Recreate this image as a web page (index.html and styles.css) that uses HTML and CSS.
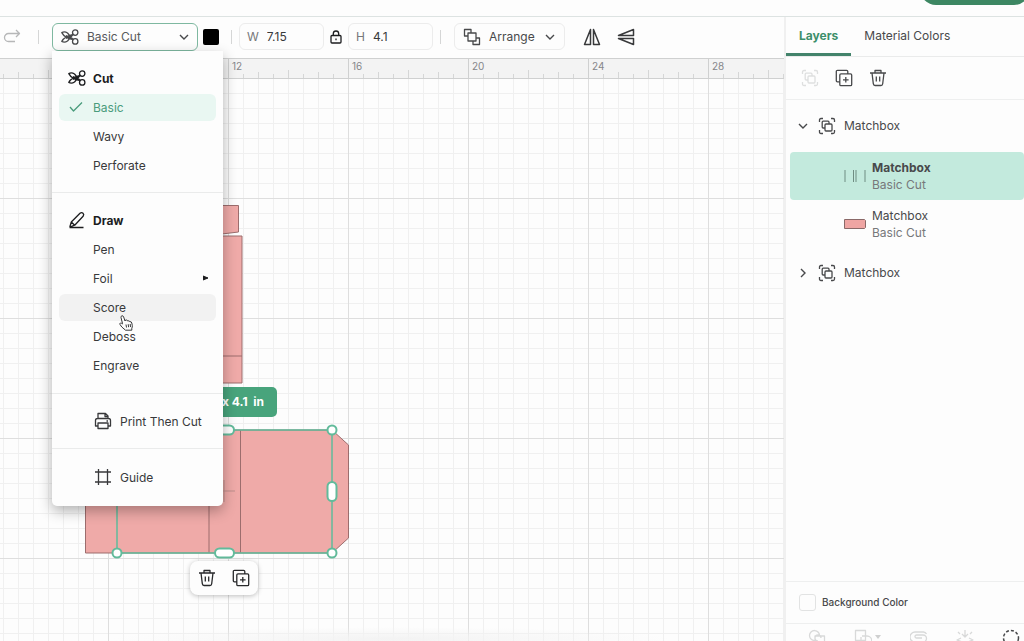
FILE: index.html
```html
<!DOCTYPE html>
<html lang="en">
<head>
<meta charset="utf-8">
<title>Design canvas</title>
<link rel="stylesheet" href="styles.css">
</head>
<body>
<svg class="sprite" aria-hidden="true">
  <symbol id="scissors" viewBox="0 0 18 16">
    <circle cx="14.2" cy="3.6" r="2.7"/><circle cx="14.2" cy="12.4" r="2.7"/>
    <path d="M.8 3.6Q3.5 2 6.5 4L12.200 10.6Q3.500 8.800 .8 3.600zM.8 12.400Q3.500 14 6.500 12L12.200 5.400Q3.500 7.200 .8 12.400zM5 6.500l5 2.500M5 9.500l5-2.500"/>
  </symbol>
  <symbol id="chevron" viewBox="0 0 10 10"><path d="m1 3 4 4 4-4"/></symbol>
  <symbol id="trash" viewBox="0 0 18 18"><path d="M1 4h16M6 4V1.5h6V4M3 4l1.3 10.7Q4.5 16.5 6 16.5h6q1.5 0 1.7-1.8L15 4M7.3 7.5v5M10.700 7.5v5"/></symbol>
  <symbol id="duplicate" viewBox="0 0 18 18"><path d="M4.8 12.8H2.5Q1.3 12.8 1.3 11.6V2.5q0-1.2 1.2-1.2h9.1q1.2 0 1.2 1.2v2.3M6 4.8h9.5q1.2 0 1.2 1.2v9.5q0 1.2-1.2 1.2H6q-1.2 0-1.2-1.2V6Q4.8 4.8 6 4.8zM10.8 8v5.6M8 10.8h5.6"/></symbol>
  <symbol id="group" viewBox="0 0 18 18"><path d="M1.5 5V3q0-1.5 1.5-1.5h2M13 1.5h2q1.5 0 1.5 1.5v2M16.5 13v2q0 1.5-1.5 1.5h-2M5 16.5H3q-1.5 0-1.5-1.5v-2M7 11H5.200Q4.200 11 4.200 10V5.200q0-1 1-1H10q1 0 1 1V7M8 7h5q1 0 1 1v5q0 1-1 1H8q-1 0-1-1V8q0-1 1-1z"/></symbol>
</svg>

<div class="app">
  <header class="topbar"><button class="make" type="button" aria-label="Make"></button></header>
  <div class="body">
    <main class="workspace">
      <div class="toolbar">
        <button class="icon-btn redo" type="button" aria-label="Redo"><svg class="icon" viewBox="0 0 18 18"><path d="M16 5.5H5.5a4 4 0 0 0 0 8H12M13 2l3.5 3.5L13 9"/></svg></button>
        <span class="sep sep-a"></span>
        <div class="operation">
          <svg class="icon op-icon" viewBox="0 0 18 16"><use href="#scissors"/></svg>
          <select class="op-select" aria-label="Operation"><option>Basic Cut</option><option>Score</option></select>
          <svg class="chev op-chev" viewBox="0 0 10 10"><use href="#chevron"/></svg>
          <div class="menu">
            <div class="menu-group">
              <h2 class="menu-title"><svg class="icon" viewBox="0 0 18 16"><use href="#scissors"/></svg>Cut</h2>
              <button class="item chosen" type="button"><svg class="icon check" viewBox="0 0 18 18"><path d="m3 9 3.5 4L15 4.5"/></svg>Basic</button>
              <button class="item" type="button">Wavy</button>
              <button class="item" type="button">Perforate</button>
            </div>
            <div class="menu-group draw">
              <h2 class="menu-title"><svg class="icon" viewBox="0 0 18 18"><path d="M1.5 16.5h14M1.8 16l1.5-5L12 2.300q1.600-1.300 3 0t.1 3L6.700 14.200 1.800 16M3.300 11l3.400 3.200"/></svg>Draw</h2>
              <button class="item" type="button">Pen</button>
              <button class="item" type="button">Foil<svg class="arrow" viewBox="0 0 5 6"><path d="M0 1v4l5-2z"/></svg></button>
              <button class="item hovered" type="button">Score</button>
              <button class="item" type="button">Deboss</button>
              <button class="item" type="button">Engrave</button>
            </div>
            <div class="menu-group">
              <button class="item wide" type="button"><svg class="icon" viewBox="0 0 18 18"><path d="M4 6.5v-5h7.5L14 4v2.5M11 1.5v3h3M4 14H1.5V8.5q0-2 2-2h11q2 0 2 2V14H14M4 11h10v5.5H4zM12.5 9h1.5"/></svg>Print Then Cut</button>
            </div>
            <div class="menu-group last">
              <button class="item wide" type="button"><svg class="icon" viewBox="0 0 18 18"><path d="M4.5 1v16M13.5 1v16M1 4h16M1 14h16"/></svg>Guide</button>
            </div>
            <svg class="cursor" viewBox="0 0 14 16"><path d="M3.5 8.5 2 2.5Q1.8 1 3 .8t1.600 1L6 6q.2-1.5 1.700-1 .8.2.9 1 1.5-.7 2.3.7 1.5-.4 1.900 1.3l.5 2.700q.2 1.3-.5 2.5v2H6.5L2.8 12 1 9.5q-.5-1 .3-1.400t2.200.9zM7 9.5l.5 3M9.200 9.2l.4 3M11.2 9l.3 3"/></svg>
          </div>
        </div>
        <button class="swatch" type="button" aria-label="Color"></button>
        <span class="sep sep-b"></span>
        <label class="field">W<input class="value" value="7.15"></label>
        <button class="icon-btn lock" type="button" aria-label="Lock proportions"><svg class="icon" viewBox="0 0 12 14"><path d="M2 5.5h8q1 0 1 1V12q0 1-1 1H2q-1 0-1-1V6.5q0-1 1-1zM3.3 5.5V3.7a2.7 2.7 0 0 1 5.4 0v1.8M6 8.5v1.7"/></svg></button>
        <label class="field">H<input class="value" value="4.1"></label>
        <span class="sep sep-c"></span>
        <button class="arrange" type="button"><svg class="icon" viewBox="0 0 18 18"><path d="M4.5 8H1.5V1.5H8v3M5 5h8v8H5zM10 13.5v3h6.5V10h-3"/></svg>Arrange<svg class="chev" viewBox="0 0 10 10"><use href="#chevron"/></svg></button>
        <div class="flips">
          <button class="icon-btn" type="button" aria-label="Flip horizontal"><svg class="icon" viewBox="0 0 18 18"><path d="M7.5 1.5v15h-6zM10.5 1.5v15h6z"/></svg></button>
          <button class="icon-btn" type="button" aria-label="Flip vertical"><svg class="icon" viewBox="0 0 18 18"><path d="M16.5 7.5h-15l15-6zM16.5 10.5h-15l15 6z"/></svg></button>
        </div>
      </div>
      <div class="ruler"><span class="mark">8</span><span class="mark">12</span><span class="mark">16</span><span class="mark">20</span><span class="mark">24</span><span class="mark">28</span></div>
      <div class="canvas">
        <svg class="art" viewBox="0 0 784 562">
          <g class="paper">
            <path d="M180 126.5h58.5V153L180 160z"/>
            <path d="M180 157h62v147h-62zM180 277h62"/>
            <path d="M85.5 351H332l16.5 15v93L332 474H85.5z"/>
            <path d="M209 351v123M240.5 351v123"/>
          </g>
          <path class="cross" d="M212 412h23M224 401v22"/>
          <g class="selection">
            <rect x="117" y="351" width="215" height="123"/>
            <circle cx="117" cy="474" r="4.5"/><circle cx="332" cy="474" r="4.5"/><circle cx="332" cy="351" r="4.5"/>
            <rect class="grip" x="215" y="346.5" width="19" height="9" rx="4.5"/>
            <rect class="grip" x="215" y="469.5" width="19" height="9" rx="4.5"/>
            <rect class="grip" x="327.5" y="403" width="9" height="19" rx="4.5"/>
          </g>
        </svg>
        <output class="size-tag">7.15 in x 4.1&nbsp; in</output>
        <div class="quick">
          <button class="icon-btn" type="button" aria-label="Delete"><svg class="icon" viewBox="0 0 18 18"><use href="#trash"/></svg></button>
          <button class="icon-btn" type="button" aria-label="Duplicate"><svg class="icon" viewBox="0 0 18 18"><use href="#duplicate"/></svg></button>
        </div>
      </div>
    </main>
    <aside class="side">
      <nav class="tabs"><button class="tab current" type="button">Layers</button><button class="tab" type="button">Material Colors</button></nav>
      <div class="actions">
        <button class="icon-btn faint" type="button" aria-label="Group"><svg class="icon" viewBox="0 0 18 18"><use href="#group"/></svg></button>
        <button class="icon-btn" type="button" aria-label="Duplicate"><svg class="icon" viewBox="0 0 18 18"><use href="#duplicate"/></svg></button>
        <button class="icon-btn" type="button" aria-label="Delete"><svg class="icon" viewBox="0 0 18 18"><use href="#trash"/></svg></button>
      </div>
      <div class="layers">
        <button class="group-row" type="button"><svg class="chev" viewBox="0 0 10 10"><use href="#chevron"/></svg><svg class="icon" viewBox="0 0 18 18"><use href="#group"/></svg>Matchbox</button>
        <button class="layer selected" type="button"><svg class="thumb" viewBox="0 0 22 12"><path d="M1 0v12M9.5 0v12M12 0v12M21 0v12"/></svg><span class="names"><span class="name">Matchbox</span><span class="kind">Basic Cut</span></span></button>
        <button class="layer" type="button"><svg class="thumb" viewBox="0 0 22 12"><path class="pink" d="M.5 1.5h20l1 1v7l-1 1H.5z"/></svg><span class="names"><span class="name">Matchbox</span><span class="kind">Basic Cut</span></span></button>
        <button class="group-row" type="button"><svg class="chev closed" viewBox="0 0 10 10"><use href="#chevron"/></svg><svg class="icon" viewBox="0 0 18 18"><use href="#group"/></svg>Matchbox</button>
      </div>
      <label class="background"><input class="box" type="checkbox">Background Color</label>
      <div class="tools">
        <button class="icon-btn" type="button" aria-label="Slice"><svg class="icon" viewBox="0 0 18 18"><path d="M7 11.5A5 5 0 1 1 11.5 7M7 7h9.5v9.5H7zM10 12a3 3 0 1 1 3-3"/></svg></button>
        <button class="icon-btn combine" type="button" aria-label="Combine"><svg class="icon" viewBox="0 0 18 18"><path d="M1.5 1.5h10v10h-10zM8 7h5a3.5 3.5 0 0 1 0 9.5H7V8"/></svg><svg class="caret" viewBox="0 0 6 4"><path d="M0 0h6L3 4z"/></svg></button>
        <button class="icon-btn" type="button" aria-label="Attach"><svg class="icon" viewBox="0 0 18 18"><path d="M12 9H6.5a1.5 1.5 0 0 1 0-3H13a3.5 3.5 0 0 1 0 7H5A5 5 0 0 1 5 3h8.5a4 4 0 0 1 3 2"/></svg></button>
        <button class="icon-btn" type="button" aria-label="Flatten"><svg class="icon" viewBox="0 0 18 18"><path d="M9 1v7M6 5l3 3 3-3M5 9l-4 2 8 3 8-3-4-2M2 3l2 2M16 3l-2 2"/></svg></button>
        <button class="icon-btn contour" type="button" aria-label="Contour"><svg class="icon" viewBox="0 0 18 18"><circle cx="9" cy="9" r="7.5"/></svg></button>
      </div>
    </aside>
  </div>
</div>
</body>
</html>
```
FILE: styles.css
```css
* { box-sizing: border-box; }
body { margin: 0; font-family: Inter, "Liberation Sans", sans-serif; font-size: 12px; line-height: 17px; color: #48494b; background: #fdfdfd; }
button, input, select { font: inherit; color: inherit; }
button { border: 0; padding: 0; background: none; text-align: left; }
svg { fill: none; stroke: currentColor; flex: none; }
.sprite { position: absolute; width: 0; height: 0; }
.icon { width: 18px; height: 18px; stroke-width: 1.3; stroke-linejoin: round; }
.chev { width: 10px; height: 10px; stroke-width: 1.4; }
.icon-btn { display: flex; color: #48494b; }
.app { display: flex; flex-direction: column; height: 100vh; overflow: hidden; }
.topbar { display: flex; justify-content: flex-end; align-items: flex-end; height: 17px; padding-bottom: 11px; border-bottom: 1px solid #dde3e2; overflow: hidden; flex: none; }
.make { width: 110px; height: 32px; margin-right: -6px; border-radius: 16px; background: #3d8763; flex: none; }
.body { display: flex; flex: 1; min-height: 0; }
.workspace { display: flex; flex-direction: column; flex: 1; min-width: 0; }

.toolbar { display: flex; align-items: center; height: 41px; padding: 0 0 2px 3px; position: relative; z-index: 2; flex: none; }
.redo { color: #b6b7b8; }
.sep { width: 1px; height: 14px; background: #d5d6d6; }
.sep-a { margin: 0 13px 0 17px; }
.sep-b { margin: 0 7px 0 12px; }
.sep-c { margin: 0 13px 0 7px; }
.operation { position: relative; display: flex; align-items: center; width: 146px; height: 28px; }
.op-select { appearance: none; width: 100%; height: 100%; border: 1px solid #7eb8a0; border-radius: 6px; background: #fdfdfd; padding: 0 24px 0 34px; color: #58595b; }
.op-icon { position: absolute; left: 9px; pointer-events: none; }
.op-chev { position: absolute; right: 9px; pointer-events: none; }
.swatch { width: 16px; height: 16px; margin-left: 5px; border-radius: 2px; background: #000; }
.field { display: flex; align-items: center; gap: 8px; width: 85px; height: 27px; padding: 0 7px; border: 1px solid #ececec; border-radius: 6px; color: #77787a; }
.value { width: 100%; min-width: 0; border: 0; padding: 0; background: none; color: #38393b; }
.lock { width: 24px; justify-content: center; color: #1c1d1f; }
.lock .icon { width: 12px; height: 14px; }
.arrange { display: flex; align-items: center; gap: 8px; width: 111px; height: 27px; padding: 0 9px 0 8px; border: 1px solid #ececec; border-radius: 6px; }
.arrange .chev { margin-left: auto; }
.flips { display: flex; gap: 16px; margin-left: 18px; }
.flips .icon { stroke-width: 1.5; color: #38393b; }

.menu { position: absolute; top: 100%; left: 0; width: 171px; background: #fdfdfd; border-radius: 0 0 5px 5px; box-shadow: 0 5px 14px rgba(0, 0, 0, .3); color: #38393b; }
.menu-group { display: flex; flex-direction: column; gap: 2px; padding: 14px 7px 13px; }
.menu-group + .menu-group { border-top: 1px solid #eaebeb; }
.menu-group.draw { padding-bottom: 14px; }
.menu-group.last { padding: 15px 7px; }
.menu-title { display: flex; align-items: center; gap: 7px; height: 27px; margin: 0; padding-left: 9px; font-size: 12px; font-weight: 700; color: #1c1d1f; }
.item { position: relative; display: flex; align-items: center; height: 27px; padding: 0 8px 0 34px; border-radius: 6px; }
.item.wide { gap: 8px; padding-left: 35px; }
.chosen { background: #e9f7f2; color: #4a9c7c; }
.check { position: absolute; left: 8px; }
.hovered { background: #f2f2f2; }
.arrow { width: 5px; height: 6px; margin-left: auto; fill: #1c1d1f; stroke-width: 1; color: #1c1d1f; }
.cursor { position: absolute; left: 67px; top: 264px; width: 14px; height: 16px; fill: #fdfdfd; stroke-width: 1; }

.ruler { display: flex; height: 21px; padding-left: 107px; overflow: hidden; flex: none; border: solid #cfd0d0; border-width: 1px 0; color: #85868a; font-size: 10px; line-height: 15px;
  background:
    linear-gradient(90deg, #d5d6d6 1px, transparent 1px) -12px 100% / 60px 8px repeat-x,
    linear-gradient(90deg, #d5d6d6 1px, transparent 1px) -12px 100% / 30px 6px repeat-x,
    linear-gradient(90deg, #d5d6d6 1px, transparent 1px) -12px 100% / 15px 4px repeat-x,
    #f3f3f3; }
.mark { width: 120px; padding-left: 3px; border-left: 1px solid #cfd0d0; flex: none; }
.mark:first-child { width: 121px; }
.canvas { position: relative; flex: 1; min-height: 0; overflow: hidden;
  background:
    radial-gradient(closest-side, #f3f3f3, transparent) 50% calc(100% + 10px) / 560px 24px no-repeat,
    linear-gradient(90deg, #dedede 1px, transparent 1px) -12px 0 / 120px 120px,
    linear-gradient(#dedede 1px, transparent 1px) 0 -1px / 120px 120px,
    linear-gradient(90deg, #f0f0f0 1px, transparent 1px) -12px 0 / 15px 15px,
    linear-gradient(#f0f0f0 1px, transparent 1px) 0 -1px / 15px 15px; }
.art { position: absolute; left: 0; top: 0; width: 784px; height: 562px; }
.paper { fill: #efaaa8; stroke: #9c6d6d; stroke-width: 1; }
.cross { stroke: #bd8e8b; }
.selection { stroke: #62bb9b; stroke-width: 1.5; }
.selection circle, .selection .grip { fill: #fff; stroke-width: 2; }
.size-tag { position: absolute; left: 172px; top: 308px; width: 105px; padding: 6px 13px 7px 0; border-radius: 5px; background: #48a47c; color: #fff; font-weight: 700; text-align: right; white-space: nowrap; }
.quick { position: absolute; left: 190px; top: 482px; display: flex; gap: 16px; padding: 8px; border-radius: 8px; background: #fdfdfd; box-shadow: 0 1px 5px rgba(0, 0, 0, .25); }
.quick .icon-btn { color: #28292b; }

.side { display: flex; flex-direction: column; width: 240px; border-left: 2px solid #f0f0f0; flex: none; overflow: hidden; }
.tabs { display: flex; border-bottom: 1px solid #eaebeb; flex: none; }
.tab { height: 39px; padding: 0 13px; border-bottom: 3px solid transparent; }
.current { border-color: #43836b; color: #3d8f6b; font-weight: 700; }
.actions { display: flex; gap: 16px; padding: 12px 15px; border-bottom: 1px solid #eeefef; flex: none; }
.icon-btn.faint { color: #dedfdf; }
.layers { display: flex; flex-direction: column; padding: 13px 0 0 4px; flex: 1; min-height: 0; }
.group-row { display: flex; align-items: center; gap: 8px; height: 25px; padding-left: 8px; }
.group-row .chev { margin-right: 2px; }
.closed { transform: rotate(-90deg); }
.layer { display: flex; align-items: center; gap: 6px; height: 48px; padding: 0 0 1px 54px; border-radius: 4px; }
.group-row + .layer { margin-top: 14px; }
.layer + .group-row { margin-top: 12px; }
.selected { background: #c3eadd; }
.selected .name { font-weight: 700; }
.thumb { width: 22px; height: 12px; color: #6f8d82; }
.pink { fill: #efa5a3; stroke: #8a6968; }
.names { display: flex; flex-direction: column; }
.kind { color: #77787a; }
.background { display: flex; align-items: center; gap: 6px; height: 43px; padding-left: 13px; border: solid #eeefef; border-width: 1px 0; font-size: 10px; font-weight: 500; flex: none; }
.box { appearance: none; width: 17px; height: 17px; margin: 0; border: 1px solid #e2e3e3; border-radius: 3px; flex: none; }
.tools { display: flex; justify-content: space-between; height: 17px; padding: 5px 4px 0 22px; overflow: hidden; flex: none; }
.tools .icon-btn { color: #d8d9d9; }
.combine { align-items: flex-start; }
.caret { width: 6px; height: 4px; margin: 6px 0 0 3px; fill: #cfd0d0; stroke: none; }
.tools .contour { color: #48494b; }
.contour circle { stroke-dasharray: 3 2; stroke-width: 1.5; }
```
